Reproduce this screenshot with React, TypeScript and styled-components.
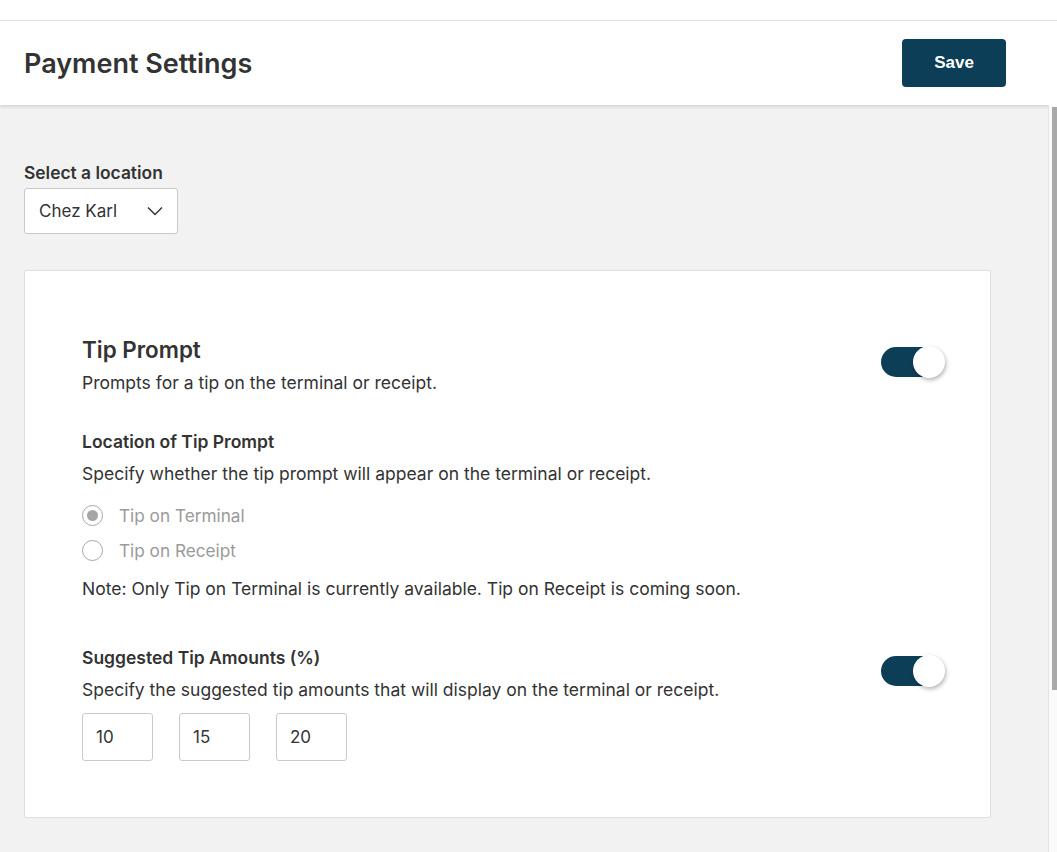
import { createGlobalStyle } from 'styled-components'
import styled from 'styled-components'

const GlobalStyle = createGlobalStyle`
	html, body {
		margin: 0;
		padding: 0;
		height: 100%;
		overflow: hidden;
	}
	body {
		font-family: Inter, 'Liberation Sans', sans-serif;
		color: #333;
		background: #fff;
	}
	* {
		box-sizing: border-box;
	}
`

const Toggle = ({ on }: { on: boolean }) => (
	<ToggleTrack $on={on}>
		<ToggleKnob $on={on} />
	</ToggleTrack>
)

const App = () => {
	const tips = ['10', '15', '20']
	return (
		<Page>
			<GlobalStyle />
			<TopStrip />
			<Header>
				<Title>Payment Settings</Title>
				<SaveButton>Save</SaveButton>
			</Header>
			<MainWrap>
				<Main>
					<Content>
						<Label>Select a location</Label>
						<SelectBox>
							<span>Chez Karl</span>
							<svg width="16" height="10" viewBox="0 0 16 10">
								<path d="M1 1.5 L8 8.5 L15 1.5" fill="none" stroke="#333" strokeWidth="1.4" />
							</svg>
						</SelectBox>
						<Card>
							<Row>
								<div>
									<CardTitle>Tip Prompt</CardTitle>
									<Text>Prompts for a tip on the terminal or receipt.</Text>
								</div>
								<Toggle on />
							</Row>
							<Section>
								<SubTitle>Location of Tip Prompt</SubTitle>
								<Text>Specify whether the tip prompt will appear on the terminal or receipt.</Text>
								<RadioList>
									<RadioRow>
										<Radio $checked />
										<RadioLabel>Tip on Terminal</RadioLabel>
									</RadioRow>
									<RadioRow>
										<Radio />
										<RadioLabel>Tip on Receipt</RadioLabel>
									</RadioRow>
								</RadioList>
								<Text>Note: Only Tip on Terminal is currently available. Tip on Receipt is coming soon.</Text>
							</Section>
							<Section $gap={45}>
								<Row>
									<div>
										<SubTitle>Suggested Tip Amounts (%)</SubTitle>
										<Text>Specify the suggested tip amounts that will display on the terminal or receipt.</Text>
									</div>
									<Toggle on />
								</Row>
								<Inputs>
									{tips.map((t) => (
										<TipInput key={t} defaultValue={t} />
									))}
								</Inputs>
							</Section>
						</Card>
					</Content>
				</Main>
				<ScrollRail>
					<ScrollThumb />
				</ScrollRail>
			</MainWrap>
		</Page>
	)
}
export default App

const Page = styled.div`
	display: flex;
	flex-direction: column;
	height: 100vh;
`
const TopStrip = styled.div`
	height: 21px;
	flex-shrink: 0;
	border-bottom: 1px solid #dedede;
	background: #fff;
`
const Header = styled.header`
	display: flex;
	align-items: center;
	justify-content: space-between;
	height: 84px;
	flex-shrink: 0;
	padding: 0 51px 0 24px;
	background: #fff;
	box-shadow: 0 2px 3px rgba(0, 0, 0, 0.12);
	position: relative;
	z-index: 1;
`
const Title = styled.h1`
	margin: 0;
	font-size: 27px;
	font-weight: 600;
	color: #333;
`
const SaveButton = styled.button`
	width: 104px;
	height: 48px;
	border: none;
	border-radius: 4px;
	background: #0c3f57;
	color: #fff;
	font-family: 'Liberation Sans', Arial, sans-serif;
	font-size: 17px;
	font-weight: 700;
`
const MainWrap = styled.div`
	position: relative;
	flex: 1;
	min-height: 0;
	display: flex;
`
const Main = styled.main`
	flex: 1;
	overflow: hidden;
	background: #f2f2f2;
`
const ScrollRail = styled.div`
	position: absolute;
	top: 0;
	right: 0;
	bottom: 0;
	width: 9px;
	padding: 2px 0 0 3px;
	background: #fafafa;
	border-left: 1px solid #e4e4e4;
	z-index: 2;
`
const ScrollThumb = styled.div`
	height: 583px;
	background: #a9a9a9;
`
const Content = styled.div`
	padding: 56px 57px 210px 24px;
`
const Label = styled.div`
	font-size: 17.4px;
	font-weight: 600;
	color: #333;
	line-height: 24px;
`
const SelectBox = styled.div`
	display: flex;
	align-items: center;
	justify-content: space-between;
	width: 154px;
	height: 46px;
	margin-top: 3px;
	padding: 0 14px 0 14px;
	border: 1px solid #c9c9c9;
	border-radius: 3px;
	background: #fff;
	font-size: 17px;
	color: #333;
`
const Card = styled.section`
	margin-top: 36px;
	width: 967px;
	padding: 66px 45px 56px 57px;
	background: #fff;
	border: 1px solid #dedede;
	border-radius: 2px;
`
const Row = styled.div`
	display: flex;
	justify-content: space-between;
	align-items: flex-start;
`
const CardTitle = styled.h2`
	margin: 0 0 8px;
	font-size: 22.4px;
	font-weight: 600;
	line-height: 26px;
	color: #333;
`
const SubTitle = styled.h3`
	margin: 0 0 8px;
	font-size: 17.5px;
	font-weight: 600;
	line-height: 24px;
	color: #333;
`
const Text = styled.p`
	margin: 0;
	font-size: 17.5px;
	line-height: 24px;
	color: #333;
`
const Section = styled.div<{ $gap?: number }>`
	margin-top: ${(p) => p.$gap ?? 35}px;
`
const RadioList = styled.div`
	display: flex;
	flex-direction: column;
	gap: 11px;
	margin: 17px 0 15px;
`
const RadioRow = styled.label`
	display: flex;
	align-items: center;
	gap: 16px;
	height: 24px;
`
const Radio = styled.span<{ $checked?: boolean }>`
	width: 21px;
	height: 21px;
	border-radius: 50%;
	border: 1.5px solid #a6a6a6;
	display: flex;
	align-items: center;
	justify-content: center;

	&::after {
		content: '';
		width: 11px;
		height: 11px;
		border-radius: 50%;
		background: ${(p) => (p.$checked ? '#a6a6a6' : 'transparent')};
	}
`
const RadioLabel = styled.span`
	font-size: 17.2px;
	color: #9a9a9a;
`
const ToggleTrack = styled.div<{ $on: boolean }>`
	position: relative;
	width: 64px;
	height: 32px;
	margin-top: 9px;
	flex-shrink: 0;

	&::before {
		content: '';
		position: absolute;
		left: 0;
		top: 1px;
		width: 56px;
		height: 30px;
		border-radius: 15px;
		background: ${(p) => (p.$on ? '#0c3f57' : '#ccc')};
	}
`
const ToggleKnob = styled.div<{ $on: boolean }>`
	position: absolute;
	top: 0;
	left: ${(p) => (p.$on ? '32px' : '0')};
	width: 32px;
	height: 32px;
	border-radius: 50%;
	background: #fff;
	box-shadow: 1px 2px 4px rgba(0, 0, 0, 0.3);
`
const Inputs = styled.div`
	display: flex;
	gap: 26px;
	margin-top: 11px;
`
const TipInput = styled.input`
	width: 71px;
	height: 48px;
	padding: 0 13px;
	border: 1px solid #c9c9c9;
	border-radius: 3px;
	font-family: Inter, 'Liberation Sans', sans-serif;
	font-size: 17px;
	color: #333;
	outline: none;
`
